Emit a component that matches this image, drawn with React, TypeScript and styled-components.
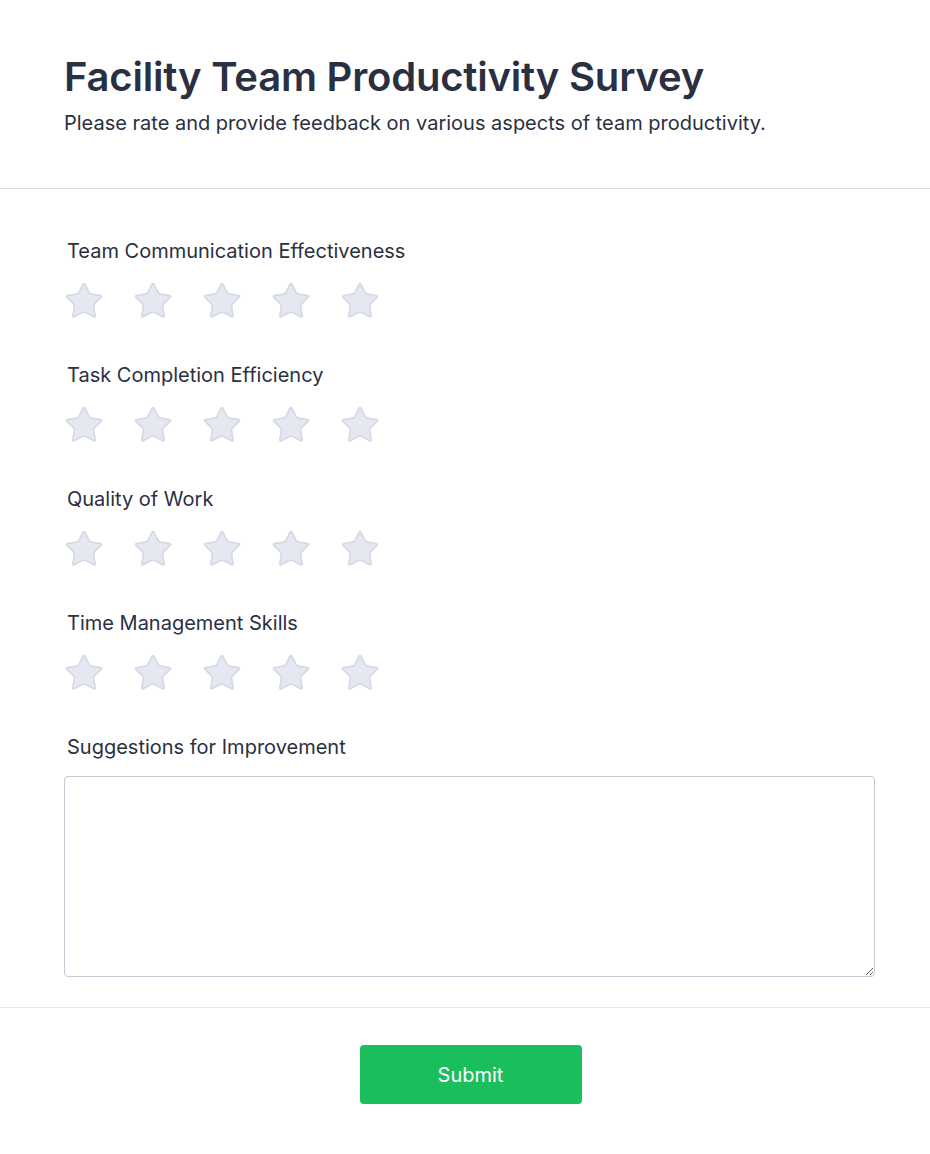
import React, { useState } from "react";
import styled, { createGlobalStyle } from "styled-components";
import { Star } from "lucide-react";

const GlobalStyle = createGlobalStyle`
  body {
    margin: 0;
    background: #ffffff;
    font-family: Inter, "Noto Sans", "Liberation Sans", sans-serif;
    color: #2a3042;
  }
  * { box-sizing: border-box; }
`;

const Page = styled.div`
  width: 930px;
  min-height: 1154px;
  background: #ffffff;
`;

const Header = styled.header`
  padding: 53px 64px 50px;
  border-bottom: 1px solid #dcdbe9;
`;

const Title = styled.h1`
  margin: 0;
  font-size: 40px;
  line-height: 48px;
  font-weight: 600;
  color: #2a3042;
  letter-spacing: -0.2px;
`;

const Subtitle = styled.p`
  margin: 7px 0 0;
  font-size: 20px;
  line-height: 30px;
  font-weight: 400;
  color: #2a3042;
`;

const Body = styled.main`
  padding: 47px 55px 30px 64px;
  display: flex;
  flex-direction: column;
  gap: 38px;
`;

const Question = styled.section`
  display: flex;
  flex-direction: column;
  gap: 14px;
`;

const Label = styled.label`
  padding-left: 3px;
  font-size: 20px;
  line-height: 30px;
  font-weight: 400;
  color: #2a3042;
`;

const Stars = styled.div`
  display: flex;
  gap: 27px;
  margin-left: -1px;
`;

const StarButton = styled.button<{ $on: boolean }>`
  padding: 0;
  border: none;
  background: none;
  cursor: pointer;
  display: flex;
  color: ${(p) => (p.$on ? "#e8b020" : "#d6d9e6")};
  svg {
    fill: ${(p) => (p.$on ? "#f5c842" : "#e5e7f1")};
  }
`;

const TextArea = styled.textarea`
  display: block;
  width: 811px;
  height: 201px;
  border: 1px solid #c8c8d6;
  border-radius: 4px;
  padding: 10px 12px;
  font-family: inherit;
  font-size: 16px;
  color: #2a3042;
  resize: vertical;
  outline: none;
`;

const Footer = styled.footer`
  border-top: 1px solid #e9e8f0;
  padding: 37px 0 50px;
  display: flex;
  justify-content: center;
`;

const SubmitButton = styled.button`
  width: 222px;
  height: 59px;
  border: none;
  border-radius: 4px;
  background: #1abe5d;
  color: #ffffff;
  font-family: inherit;
  font-size: 20px;
  font-weight: 400;
  cursor: pointer;
  margin-left: 11px;
`;

const questions = [
  "Team Communication Effectiveness",
  "Task Completion Efficiency",
  "Quality of Work",
  "Time Management Skills",
];

const Rating = ({ label }: { label: string }) => {
  const [value, setValue] = useState(0);
  return (
    <Question>
      <Label>{label}</Label>
      <Stars>
        {[1, 2, 3, 4, 5].map((n) => (
          <StarButton key={n} $on={n <= value} onClick={() => setValue(n)} aria-label={`${n} stars`}>
            <Star size={42} strokeWidth={1} />
          </StarButton>
        ))}
      </Stars>
    </Question>
  );
};

const App = () => {
  return (
    <Page>
      <GlobalStyle />
      <Header>
        <Title>Facility Team Productivity Survey</Title>
        <Subtitle>Please rate and provide feedback on various aspects of team productivity.</Subtitle>
      </Header>
      <Body>
        {questions.map((q) => (
          <Rating key={q} label={q} />
        ))}
        <Question>
          <Label>Suggestions for Improvement</Label>
          <TextArea />
        </Question>
      </Body>
      <Footer>
        <SubmitButton>Submit</SubmitButton>
      </Footer>
    </Page>
  );
};

export default App;
